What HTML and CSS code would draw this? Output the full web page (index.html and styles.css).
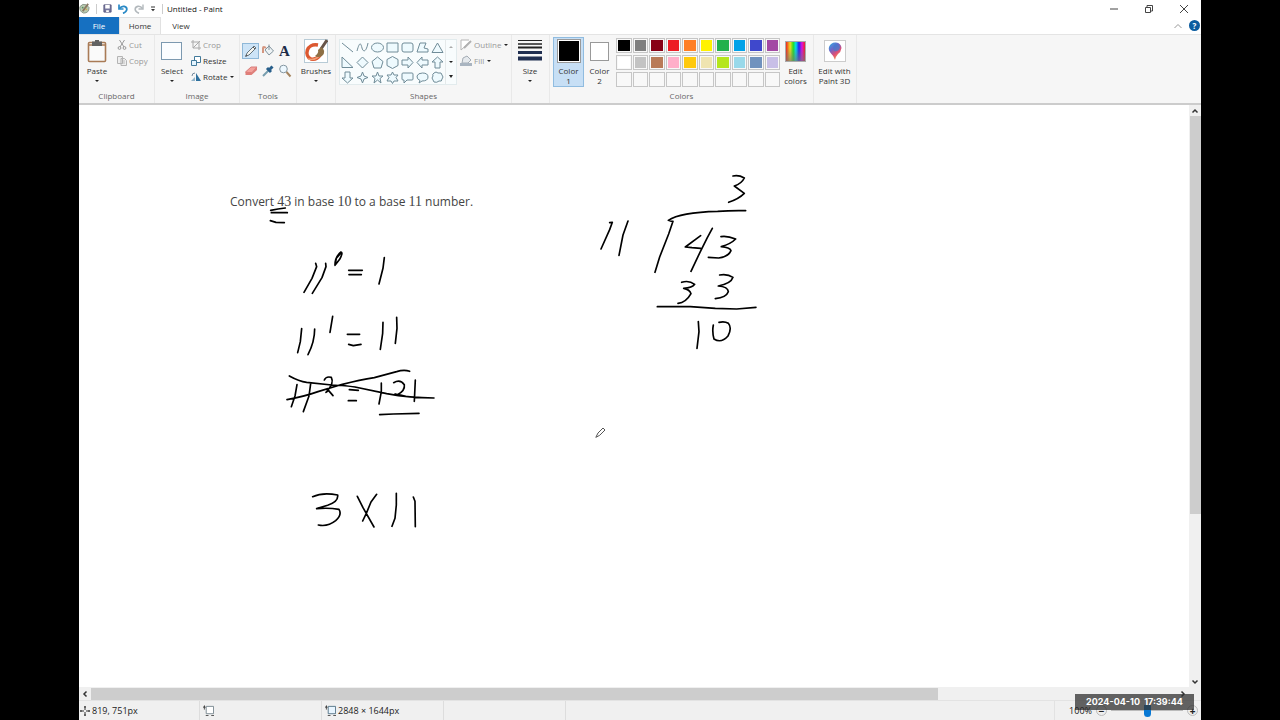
FILE: index.html
```html
<!DOCTYPE html>
<html lang="en">
<head>
<meta charset="utf-8">
<title>Untitled - Paint</title>
<link rel="stylesheet" href="styles.css">
</head>
<body>
<div class="app">
  <header class="titlebar">
    <div class="quick">
      <svg class="i11" viewBox="0 0 12 12"><path d="M1 4Q4 0 8 2L11 5Q11 11 5 11Q0 9 1 4Z" fill="#b9cbb0" stroke="#879384"/><path d="M4 9L10 1" stroke="#8a7862" stroke-width="2"/><circle cx="4" cy="5" r="1" fill="#568a63"/><circle cx="8" cy="7" r="1" fill="#d1a957"/></svg>
      <span class="bar"></span>
      <button aria-label="Save"><svg class="i9" viewBox="0 0 10 10"><path d="M1 1H9V9H1Z" fill="#77779e" stroke="#57577e"/><path d="M2.500 1H7.500V5H2.500ZM3.500 7H6.500V9H3.500Z" fill="#fff"/></svg></button>
      <button aria-label="Undo"><svg class="i10" viewBox="0 0 10 10"><path d="M1 .5V5H5.5" fill="none" stroke="#2989c6" stroke-width="1.7"/><path d="M1.5 4.5C4 1 9 2 8.8 5.5Q8.5 8 5 9.3" fill="none" stroke="#2989c6" stroke-width="1.8"/></svg></button>
      <button aria-label="Redo"><svg class="i10" viewBox="0 0 10 10"><path d="M9 .5V5H4.5" fill="none" stroke="#b2b8bc" stroke-width="1.4"/><path d="M8.5 4.5C6 1 1 2 1.2 5.5Q1.5 8 5 9.3" fill="none" stroke="#b2b8bc" stroke-width="1.6"/></svg></button>
      <button aria-label="Customize toolbar"><svg class="i6" viewBox="0 0 6 6"><path d="M1 1H5" stroke="#333"/><path d="M1 3H5L3 5.3Z" fill="#333"/></svg></button>
      <span class="bar"></span>
    </div>
    <h1 class="title">Untitled - Paint</h1>
    <div class="window-buttons">
      <button aria-label="Minimize"><svg class="i10" viewBox="0 0 10 10"><path d="M1 5H9" stroke="#444"/></svg></button>
      <button aria-label="Restore"><svg class="i10" viewBox="0 0 10 10"><path d="M1.5 3.5H6.5V8.5H1.5ZM3 3.5V1.5H8.5V7H6.5" fill="none" stroke="#444"/></svg></button>
      <button aria-label="Close"><svg class="i10" viewBox="0 0 10 10"><path d="M1 1L9 9M9 1L1 9" stroke="#444"/></svg></button>
    </div>
  </header>
  <nav class="tabs">
    <button class="tab file">File</button>
    <button class="tab home">Home</button>
    <button class="tab">View</button>
    <div class="tab-tools">
      <button aria-label="Collapse ribbon"><svg class="i10" viewBox="0 0 10 10"><path d="M1.5 7L5 3.5L8.500 7" fill="none" stroke="#999"/></svg></button>
      <button class="help" aria-label="Help">?</button>
    </div>
  </nav>
  <section class="ribbon">
    <div class="group clipboard">
      <div class="group-body">
        <button class="big"><span class="pic"><svg class="i24" viewBox="0 0 24 24"><rect x="3.500" y="3.500" width="17" height="19" rx="1" fill="#fafafa" stroke="#a97b56" stroke-width="1.600"/><path d="M4 6H20" stroke="#a97b56" stroke-width="1.500"/><path d="M7 2.500H10V1H14V2.500H17V7H7Z" fill="#626262"/></svg></span>Paste<span class="caret"></span></button>
        <div class="stack">
          <button class="small" disabled><svg class="i10" viewBox="0 0 10 10"><path d="M2.500 0L7 7M7.500 0L3 7" stroke="#999"/><circle cx="2.500" cy="8" r="1.400" fill="none" stroke="#999"/><circle cx="7.500" cy="8" r="1.400" fill="none" stroke="#999"/></svg>Cut</button>
          <button class="small" disabled><svg class="i10" viewBox="0 0 10 10"><path d="M.5 .5H5.500V7.500H.5ZM4 2.500H7.500L9.500 4.500V9.500H4Z" fill="#eee" stroke="#b4b4b4"/><path d="M5 5H8M5 7H8" stroke="#aaa" stroke-width=".7"/></svg>Copy</button>
        </div>
      </div>
      <h2>Clipboard</h2>
    </div>
    <div class="group image">
      <div class="group-body">
        <button class="big"><span class="pic"><svg class="i24" viewBox="0 0 24 24"><rect x="1.500" y="3.500" width="20" height="17" fill="#fbfdff" stroke="#7c99b0"/></svg></span>Select<span class="caret"></span></button>
        <div class="stack">
          <button class="small" disabled><svg class="i10" viewBox="0 0 10 10"><path d="M2 0V8H10M0 2H8V10M2 8L9 1" fill="none" stroke="#aaa"/></svg>Crop</button>
          <button class="small"><svg class="i10" viewBox="0 0 10 10"><path d="M3.500 .5H9.500V6.500H3.500Z" fill="#fff" stroke="#427a9b"/><path d="M.5 4.500H5.500V9.500H.5Z" fill="#e5f5ff" stroke="#427a9b"/></svg>Resize</button>
          <button class="small"><svg class="i10" viewBox="0 0 10 10"><path d="M5 1V9H10Z" fill="#2f719e"/><path d="M0 9H4V5Z" fill="#91b3c9"/><path d="M1 4Q1 1 4 1" fill="none" stroke="#71889b"/></svg>Rotate<span class="caret"></span></button>
        </div>
      </div>
      <h2>Image</h2>
    </div>
    <div class="group tools">
      <div class="group-body tool-grid">
        <button class="chosen" aria-label="Pencil"><svg class="i13" viewBox="0 0 14 14"><path d="M2 12L3 9L10 2L12 4L5 11Z" fill="#f4f4ef" stroke="#65747e"/><path d="M1 13L2 10.500L3.500 12Z" fill="#555"/><path d="M9 3L11 5" stroke="#555"/></svg></button>
        <button aria-label="Fill with color"><svg class="i13" viewBox="0 0 14 14"><path d="M4 7L8 3L12.500 8L8 12Z" fill="#eef3f5" stroke="#83949e"/><path d="M8 7V1.500" stroke="#83949e"/><path d="M2 10V5Q2 3 5 5" fill="none" stroke="#d49680" stroke-width="2"/></svg></button>
        <button class="letter" aria-label="Text">A</button>
        <button aria-label="Eraser"><svg class="i13" viewBox="0 0 14 14"><path d="M1.500 8L7 3H13L7.500 9Z" fill="#f4a19b" stroke="#d77e7c"/><path d="M1.500 8H7.500V11H1.500ZM7.500 9L13 3V6L7.500 11Z" fill="#df7e79"/></svg></button>
        <button aria-label="Color picker"><svg class="i13" viewBox="0 0 14 14"><path d="M2 12L8 6" stroke="#779dae" stroke-width="2"/><path d="M6 4L10 8M8 6L11.500 2.500" stroke="#285f8b" stroke-width="3"/></svg></button>
        <button aria-label="Magnifier"><svg class="i13" viewBox="0 0 14 14"><circle cx="5.500" cy="5" r="3.800" fill="#edf8ff" stroke="#8496a1"/><path d="M8.500 8L12.500 12.500" stroke="#a4845f" stroke-width="2"/></svg></button>
      </div>
      <h2>Tools</h2>
    </div>
    <div class="group brushes">
      <div class="group-body">
        <button class="big"><span class="pic"><svg class="i24" viewBox="0 0 24 24"><rect x=".5" y=".5" width="23" height="23" fill="#fff" stroke="#b8cbd6"/><path d="M14 6C2 4 0 17 7 20Q13 21 16 16" fill="none" stroke="#dc5830" stroke-width="3.500"/><path d="M4 20Q12 22 17 15" fill="none" stroke="#efa078" stroke-width="1.500"/><path d="M23 1L17 10" stroke="#675448" stroke-width="3"/><path d="M17 8Q23 12 18 17Q14 19 11 17Q15 14 14 11Z" fill="#8e7045"/></svg></span>Brushes<span class="caret"></span></button>
      </div>
    </div>
    <div class="group shapes">
      <div class="group-body">
        <div class="gallery">
          <div class="shape-grid">
            <button aria-label="Line"><svg viewBox="0 0 15 15"><path d="M2 3L13 12"/></svg></button>
            <button aria-label="Curve"><svg viewBox="0 0 15 15"><path d="M2 11C5 0 6 4 7 8S11 13 13 3"/></svg></button>
            <button aria-label="Oval"><svg viewBox="0 0 15 15"><ellipse cx="7.500" cy="7.500" rx="6" ry="4.500"/></svg></button>
            <button aria-label="Rectangle"><svg viewBox="0 0 15 15"><path d="M2 3H13V12H2Z"/></svg></button>
            <button aria-label="Rounded rectangle"><svg viewBox="0 0 15 15"><rect x="2" y="3" width="11" height="9" rx="2"/></svg></button>
            <button aria-label="Polygon"><svg viewBox="0 0 15 15"><path d="M2 12L5 3H11L9 8L13 9V12Z"/></svg></button>
            <button aria-label="Triangle"><svg viewBox="0 0 15 15"><path d="M7.500 3L13 12.500H2Z"/></svg></button>
            <button aria-label="Right triangle"><svg viewBox="0 0 15 15"><path d="M2 2V12.500H13Z"/></svg></button>
            <button aria-label="Diamond"><svg viewBox="0 0 15 15"><path d="M7.500 2L13 7.500L7.500 13L2 7.500Z"/></svg></button>
            <button aria-label="Pentagon"><svg viewBox="0 0 15 15"><path d="M7.500 2L13 6.500L11 13H4L2 6.500Z"/></svg></button>
            <button aria-label="Hexagon"><svg viewBox="0 0 15 15"><path d="M7.500 1.500L13 4.500V10.500L7.500 13.500L2 10.500V4.500Z"/></svg></button>
            <button aria-label="Right arrow"><svg viewBox="0 0 15 15"><path d="M2 5H8V2L13 7.500L8 13V10H2Z"/></svg></button>
            <button aria-label="Left arrow"><svg viewBox="0 0 15 15"><path d="M13 5H7V2L2 7.500L7 13V10H13Z"/></svg></button>
            <button aria-label="Up arrow"><svg viewBox="0 0 15 15"><path d="M5 13V7H2L7.500 2L13 7H10V13Z"/></svg></button>
            <button aria-label="Down arrow"><svg viewBox="0 0 15 15"><path d="M5 2V8H2L7.500 13L13 8H10V2Z"/></svg></button>
            <button aria-label="Four-point star"><svg viewBox="0 0 15 15"><path d="M7.500 2L9 6L13 7.500L9 9L7.500 13L6 9L2 7.500L6 6Z"/></svg></button>
            <button aria-label="Five-point star"><svg viewBox="0 0 15 15"><path d="M7.500 2L9 6H13L10 8.500L11 13L7.500 10L4 13L5 8.500L2 6H6Z"/></svg></button>
            <button aria-label="Six-point star"><svg viewBox="0 0 15 15"><path d="M7.500 2L9 5H13L11 7.500L13 11H9L7.500 13.500L6 11H2L4 7.500L2 5H6Z"/></svg></button>
            <button aria-label="Rounded callout"><svg viewBox="0 0 15 15"><path d="M3 3H12Q13 3 13 4V9Q13 10 12 10H7L4 13V10H3Q2 10 2 9V4Q2 3 3 3Z"/></svg></button>
            <button aria-label="Oval callout"><svg viewBox="0 0 15 15"><path d="M5 10.500Q1.500 9 2 6Q3 3 7.500 3Q13 3 13 7Q13 11 7 11L4 13Z"/></svg></button>
            <button aria-label="Cloud callout"><svg viewBox="0 0 15 15"><path d="M4 3Q6 1 8 3Q12 2 12 5Q14 7 12 9Q12 12 9 11Q7 13 4 12L3 10Q1 8 3 6Q2 4 4 3Z"/></svg></button>
          </div>
          <div class="gallery-scroll"><button aria-label="Previous shapes"><span class="caret up"></span></button><button aria-label="Next shapes"><span class="caret"></span></button><button aria-label="All shapes"><span class="caret more"></span></button></div>
        </div>
        <div class="stack">
          <button class="small" disabled><svg class="i12" viewBox="0 0 12 12"><path d="M9 1H1V11L11 2" fill="#fff" stroke="#b5b5b5"/><path d="M4 9L11 2" stroke="#b0b0b0" stroke-width="2"/></svg>Outline<span class="caret"></span></button>
          <button class="small" disabled><svg class="i12" viewBox="0 0 12 12"><path d="M2 8L3 3L7 1L11 5L8 8Z" fill="#e5e9ed" stroke="#a4acb4"/><path d="M0 8H12V11H0Z" fill="#a9b4c0"/></svg>Fill<span class="caret"></span></button>
        </div>
      </div>
      <h2>Shapes</h2>
    </div>
    <div class="group size">
      <div class="group-body">
        <button class="big"><span class="pic"><svg class="i24" viewBox="0 0 24 24"><path d="M0 1.500H24" stroke="#222"/><path d="M0 5H24" stroke="#222" stroke-width="1.500"/><path d="M0 8.500H24" stroke="#222" stroke-width="2"/><path d="M0 13.500H24" stroke="#1f2e50" stroke-width="3"/><path d="M0 19.500H24" stroke="#1f2e50" stroke-width="4"/></svg></span>Size<span class="caret"></span></button>
      </div>
    </div>
    <div class="group colors">
      <div class="group-body">
        <button class="big color-pick chosen"><span class="pic"><span class="ink one"></span></span><span>Color<br>1</span></button>
        <button class="big color-pick"><span class="pic"><span class="ink two"></span></span><span>Color<br>2</span></button>
        <div class="palette">
          <button class="c-black" aria-label="Black"></button><button class="c-gray" aria-label="Gray"></button><button class="c-maroon" aria-label="Dark red"></button><button class="c-red" aria-label="Red"></button><button class="c-orange" aria-label="Orange"></button><button class="c-yellow" aria-label="Yellow"></button><button class="c-green" aria-label="Green"></button><button class="c-turquoise" aria-label="Turquoise"></button><button class="c-indigo" aria-label="Indigo"></button><button class="c-purple" aria-label="Purple"></button>
          <button class="c-white" aria-label="White"></button><button class="c-silver" aria-label="Light gray"></button><button class="c-brown" aria-label="Brown"></button><button class="c-rose" aria-label="Rose"></button><button class="c-gold" aria-label="Gold"></button><button class="c-cream" aria-label="Light yellow"></button><button class="c-lime" aria-label="Lime"></button><button class="c-sky" aria-label="Light turquoise"></button><button class="c-steel" aria-label="Blue-gray"></button><button class="c-lavender" aria-label="Lavender"></button>
          <button aria-label="Custom 1"></button><button aria-label="Custom 2"></button><button aria-label="Custom 3"></button><button aria-label="Custom 4"></button><button aria-label="Custom 5"></button><button aria-label="Custom 6"></button><button aria-label="Custom 7"></button><button aria-label="Custom 8"></button><button aria-label="Custom 9"></button><button aria-label="Custom 10"></button>
        </div>
        <button class="big edit"><span class="pic"><span class="spectrum"></span></span><span>Edit<br>colors</span></button>
      </div>
      <h2>Colors</h2>
    </div>
    <div class="group paint3d">
      <div class="group-body">
        <button class="big"><span class="pic"><svg class="i24" viewBox="0 0 24 24"><defs><linearGradient id="drop" x1="0" y1="0" x2=".6" y2="1"><stop offset="0" stop-color="#25b5e8"/><stop offset=".4" stop-color="#6e65c8"/><stop offset=".7" stop-color="#df4e76"/><stop offset="1" stop-color="#f2a052"/></linearGradient></defs><rect x="1.500" y="1.500" width="21" height="21" fill="#fff" stroke="#ccc"/><path d="M12 21Q11 17 8 14.500Q5 11 6 8Q8 3 13 3.500Q18 4 18.500 9Q18 13 15 15Q13 17 12 21Z" fill="url(#drop)"/><path d="M12 5Q17 5 17 9Q15 13 11 12Q9 8 12 5Z" fill="#397fd3" opacity=".65"/></svg></span><span>Edit with<br>Paint 3D</span></button>
      </div>
    </div>
  </section>
  <main class="workspace">
    <div class="canvas">
      <p class="question">Convert <span class="num">43</span> in base <span class="num">10</span> to a base <span class="num">11</span> number.</p>
      <svg class="drawing" viewBox="79 105 1110 582" role="img" aria-label="Handwritten working">
        <g transform="translate(220 180) scale(.3333)"><path d="M152 91L174 87L196 84M154 98H202M151 122L168 127L193 128M287 250L290 260L276 295L252 337M317 250L318 260L306 293L277 340M345 255Q345 230 363 216Q370 218 359 238L345 256L349 235L361 221M386 271H427M387 284H424M493 233L489 265L477 312"/></g>
        <g transform="translate(270 290) scale(.3333)"><path d="M95 116L91 155L83 188M134 117Q134 155 114 194M188 79L180 127M232 133H269M236 163L250 167L273 163M339 97L338 130L331 178M380 82L381 115L376 160M58 258Q87 274 110 277L185 285Q230 287 255 291L350 311Q420 324 492 324M51 329Q105 319 144 305L217 283Q270 270 313 263L380 245Q402 238 419 244M81 284L75 318L64 350M122 281L117 318L100 365M163 270Q168 258 184 262Q194 280 168 307L176 302L189 317M238 299L265 301M235 332H259M334 279L334 305L327 342M371 278Q391 267 403 284Q406 303 381 315L375 312L392 315L407 319M436 270L433 334M329 374L370 372L447 370"/></g>
        <g transform="translate(290 420) scale(.3333)"><path d="M68 230Q98 216 143 225Q146 245 113 256L80 266Q117 263 147 268Q157 284 137 302Q113 321 85 315M202 229L219 263L252 321M260 223L243 246L229 280L218 303M319 220L319 255L315 295L306 319M370 231L375 244L376 320"/></g>
        <g transform="translate(590 160) scale(.3333)"><path d="M59 188L67 187L59 209L33 267M114 183L99 225L87 286M429 48Q446 44 463 54Q455 71 433 78L463 100Q447 116 416 127M235 181Q270 157 383 154Q425 151 467 152M240 183L249 184L236 222L209 291L195 337M332 227L286 261L306 263L332 265M367 205L352 233L330 277L303 334M393 230Q412 227 437 237Q422 252 394 260Q421 263 423 272Q416 290 386 294L355 292M275 367Q297 360 314 373Q307 384 281 385Q299 388 303 401Q288 428 264 430M389 345Q413 341 429 352Q423 371 385 378Q414 380 415 395Q409 412 376 416M202 440L301 440L376 445L440 447L498 442M325 485L327 515L321 565M370 495Q366 516 372 537Q394 551 414 528Q427 504 415 490Q404 483 387 487"/></g>
        <path class="cursor" d="M596 437L598 433L603 428L605 430L600 435Z"/>
      </svg>
    </div>
    <div class="vscroll"><button aria-label="Scroll up"><svg class="i8" viewBox="0 0 8 8"><path d="M1.500 5.500L4 3L6.500 5.500"/></svg></button><div class="track"><div class="thumb"></div></div><button aria-label="Scroll down"><svg class="i8" viewBox="0 0 8 8"><path d="M1.500 2.500L4 5L6.500 2.500"/></svg></button></div>
    <div class="hscroll"><button aria-label="Scroll left"><svg class="i8" viewBox="0 0 8 8"><path d="M5.500 1.500L3 4L5.500 6.500"/></svg></button><div class="track"><div class="thumb"></div></div><button aria-label="Scroll right"><svg class="i8" viewBox="0 0 8 8"><path d="M2.500 1.500L5 4L2.500 6.500"/></svg></button></div>
  </main>
  <footer class="status">
    <div class="cell position"><svg class="i10" viewBox="0 0 10 10"><path d="M5 0V4M5 6V10M0 5H4M6 5H10M4 1H6M4 9H6M1 4V6M9 4V6" stroke="#333"/></svg>819, 751px</div>
    <div class="cell"><svg class="i11" viewBox="0 0 12 12"><path d="M3.500 1.500H11.500V9.500H3.500Z" fill="#fff" stroke="#77858e"/><path d="M1.500 1V5M3 11.500H6M9 11.500H12" stroke="#444"/><path d="M0 3L1.500 0L3 3Z" fill="#444"/></svg></div>
    <div class="cell"><svg class="i11" viewBox="0 0 12 12"><path d="M3.500 1.500H11.500V9.500H3.500Z" fill="#e8f5ff" stroke="#527284"/><path d="M1.500 1V5M3 11.500H6M9 11.500H12" stroke="#444"/><path d="M0 3L1.500 0L3 3Z" fill="#444"/></svg>2848 × 1644px</div>
    <div class="cell"></div>
    <div class="zoom"><label for="zoom">100%</label><button aria-label="Zoom out">−</button><input id="zoom" type="range" min="0" max="100" value="50"><button aria-label="Zoom in">+</button></div>
  </footer>
  <time class="stamp">2024-04-10&nbsp; 17:39:44</time>
</div>
</body>
</html>
```
FILE: styles.css
```css
* { box-sizing: border-box; }
body {
  margin: 0;
  background: #000;
  color: #333;
  font: 8px/10px "Open Sans", "Noto Sans", sans-serif;
}
button {
  margin: 0;
  padding: 0;
  border: 0;
  background: none;
  color: inherit;
  font: inherit;
}
svg { display: block; flex: none; }
h1, h2, p { margin: 0; font: inherit; }
.i6 { width: 6px; height: 6px; }
.i8 { width: 8px; height: 8px; }
.i9 { width: 9px; height: 9px; }
.i10 { width: 10px; height: 10px; }
.i11 { width: 11px; height: 11px; }
.i12 { width: 12px; height: 12px; }
.i13 { width: 14px; height: 14px; }
.i24 { width: 24px; height: 24px; }

.app {
  position: relative;
  display: flex;
  flex-direction: column;
  height: 100vh;
  margin: 0 79px;
  background: #fff;
}
.titlebar { display: flex; align-items: center; height: 17px; }
.quick { display: flex; align-items: center; gap: 6px; }
.quick .bar { width: 1px; height: 10px; background: #ccc; }
.title { margin-left: 4px; font-size: 8px; color: #111; }
.window-buttons { display: flex; gap: 25px; margin-left: auto; padding-right: 12px; }

.tabs { display: flex; height: 17px; }
.tab { width: 40px; font-size: 8px; }
.tab.file { background: #1670c1; color: #fff; }
.tab.home {
  width: 42px;
  background: #f6f6f6;
  border: 1px solid #e1e1e1;
  border-bottom: 0;
}
.tab-tools { display: flex; align-items: center; gap: 6px; margin-left: auto; padding-right: 1px; }
.help {
  width: 11px;
  height: 11px;
  border-radius: 50%;
  background: #0b5c9f;
  color: #fff;
  font-weight: bold;
}

.ribbon {
  display: flex;
  height: 71px;
  background: #f6f6f6;
  border-top: 1px solid #e4e4e4;
  border-bottom: 2px solid #ccc;
}
.group {
  display: flex;
  flex-direction: column;
  flex: none;
  padding-top: 2px;
  border-right: 1px solid #e9e9e9;
}
.group-body { display: flex; align-items: flex-start; height: 51px; }
.group h2 { margin-top: 3px; text-align: center; color: #666; }
.clipboard { width: 76px; }
.image { width: 85px; }
.tools { width: 57px; }
.brushes { width: 39px; }
.brushes .big { width: 38px; }
.shapes { width: 176px; }
.size { width: 38px; }
.colors { width: 264px; }
.paint3d { width: 43px; }

.big {
  display: flex;
  flex-direction: column;
  align-items: center;
  width: 36px;
  height: 50px;
  text-align: center;
  white-space: nowrap;
}
.pic {
  display: flex;
  align-items: center;
  justify-content: center;
  height: 26px;
  margin: 1px 0 2px;
}
.caret {
  display: inline-block;
  border: 2px solid transparent;
  border-top-color: #222;
  border-bottom: 0;
}
.big .caret { width: 4px; margin-top: 4px; }
.caret.up { border-top: 0; border-bottom: 2px solid #aaa; }
.caret.more { border-top-width: 3px; }
.stack { display: flex; flex-direction: column; }
.small { display: flex; align-items: center; gap: 2px; height: 16px; white-space: nowrap; }
.small:disabled { color: #999; }
.small .caret { margin-left: 1px; }
.clipboard .stack { margin-left: 2px; }
.image .big { width: 34px; }
.image .stack { margin-left: 2px; }

.tool-grid {
  display: grid;
  grid-template-columns: 17px 17px 17px;
  grid-template-rows: 17px 17px;
  gap: 4px 0;
  padding: 6px 0 0 2px;
}
.tool-grid button { display: flex; align-items: center; justify-content: center; }
.tool-grid .chosen { background: #cde4f7; border: 1px solid #8fb8d8; }
.tool-grid .letter { color: #1c2c48; font: bold 15px/17px "Liberation Serif", serif; }

.gallery {
  display: flex;
  width: 118px;
  height: 46px;
  margin: 2px 3px 0 3px;
  background: #f8fcfd;
  border: 1px solid #e2ebed;
}
.shape-grid { display: grid; grid-template-columns: repeat(7, 15px); grid-template-rows: repeat(3, 15px); }
.shape-grid svg { width: 15px; height: 15px; fill: #eefafe; stroke: #708c98; stroke-width: 1; }
.shape-grid button:nth-child(-n+2) svg { fill: none; }
.gallery-scroll { display: flex; flex-direction: column; flex: 1; border-left: 1px solid #e5e9ea; }
.gallery-scroll button { display: flex; flex: 1; align-items: center; justify-content: center; }

.color-pick { width: 31px; border: 1px solid transparent; }
.color-pick .pic { margin-top: 0; }
.color-pick.chosen { background: #c7dff5; border-color: #90bce0; }
.colors .group-body { padding-left: 3px; }
.ink { border: 1px solid #999; box-shadow: inset 0 0 0 1px #fff; }
.ink.one { width: 24px; height: 24px; background: #000; }
.ink.two { width: 19px; height: 19px; background: #fff; }
.palette {
  display: grid;
  grid-template-columns: repeat(10, 1fr);
  grid-template-rows: repeat(3, 15px);
  gap: 2px 1px;
  width: 164px;
  margin: 1px 0 0 1px;
}
.palette button { border: 1px solid #c6c6c6; box-shadow: inset 0 0 0 1px #f8f8f8; background-color: #f8f8f8; }
.palette .c-black { background: #000; }
.palette .c-gray { background: #7f7f7f; }
.palette .c-maroon { background: #880015; }
.palette .c-red { background: #ed1c24; }
.palette .c-orange { background: #ff7f27; }
.palette .c-yellow { background: #fff200; }
.palette .c-green { background: #22b14c; }
.palette .c-turquoise { background: #00a2e8; }
.palette .c-indigo { background: #3f48cc; }
.palette .c-purple { background: #a349a4; }
.palette .c-white { background: #fff; }
.palette .c-silver { background: #c3c3c3; }
.palette .c-brown { background: #b97a57; }
.palette .c-rose { background: #ffaec9; }
.palette .c-gold { background: #ffc90e; }
.palette .c-cream { background: #efe4b0; }
.palette .c-lime { background: #b5e61d; }
.palette .c-sky { background: #99d9ea; }
.palette .c-steel { background: #7092be; }
.palette .c-lavender { background: #c8bfe7; }
.edit { width: 31px; }
.spectrum {
  width: 21px;
  height: 21px;
  border: 1px solid #aaa;
  background: linear-gradient(transparent 30%, #777a), linear-gradient(90deg, #e22, #ed2 22%, #2d2 38%, #0de 52%, #22e 68%, #d1d 84%, #e22);
}
.paint3d .big { width: 41px; }

.workspace {
  display: grid;
  grid-template-columns: 1fr 12px;
  grid-template-rows: 1fr 13px;
  flex: 1;
  min-height: 0;
}
.canvas { position: relative; overflow: hidden; padding: 88px 0 0 151px; background: #fff; }
.question { color: #444; font-size: 12px; line-height: 18px; white-space: nowrap; }
.num { font-family: "Liberation Serif", serif; font-size: 14px; }
.drawing {
  position: absolute;
  top: 0;
  left: 0;
  width: 1110px;
  height: 582px;
  fill: none;
  stroke: #000;
  stroke-width: 5;
  stroke-linecap: round;
  stroke-linejoin: round;
}
.drawing .cursor { stroke: #555; stroke-width: 1; fill: #fff; }
.vscroll, .hscroll { display: flex; background: #f0f0f0; }
.vscroll { flex-direction: column; }
.hscroll { grid-column: 1 / 3; align-items: center; padding-right: 12px; }
.vscroll button, .hscroll button { display: flex; align-items: center; justify-content: center; width: 12px; height: 11px; }
.vscroll svg, .hscroll svg { fill: none; stroke: #333; stroke-width: 1.5; }
.track { flex: 1; }
.vscroll .thumb { width: 11px; height: 71%; margin-left: 1px; background: #cdcdcd; }
.vscroll .track { min-height: 0; }
.hscroll .thumb { width: 78%; height: 12px; background: #cdcdcd; }

.status {
  display: flex;
  height: 20px;
  background: #f0f0f0;
  border-top: 1px solid #e3e3e3;
  color: #222;
  font-size: 9px;
}
.cell { display: flex; align-items: center; gap: 2px; width: 122px; padding: 0 0 0 3px; border-right: 1px solid #ddd; }
.cell.position { width: 121px; padding-left: 1px; }
.zoom { display: flex; align-items: center; gap: 4px; margin-left: auto; padding: 0 3px 0 14px; border-left: 1px solid #e2e2e2; }
.zoom label { position: relative; z-index: 2; }
.zoom button { width: 11px; height: 11px; border: 1px solid #bbb; border-radius: 50%; background: #eee; font: bold 10px/8px "Open Sans", sans-serif; }
.zoom input { width: 72px; height: 12px; margin: 0; appearance: none; background: linear-gradient(#bbb, #bbb) center / 100% 1px no-repeat; }
.zoom input::-webkit-slider-thumb { appearance: none; width: 7px; height: 12px; border-radius: 0 0 4px 4px; background: #0878d4; }
.stamp {
  position: absolute;
  right: 7px;
  bottom: 10px;
  width: 119px;
  height: 16px;
  background: rgba(50, 50, 50, .75);
  color: #fff;
  font: bold 9px/16px Inter, sans-serif;
  text-align: center;
}
```
